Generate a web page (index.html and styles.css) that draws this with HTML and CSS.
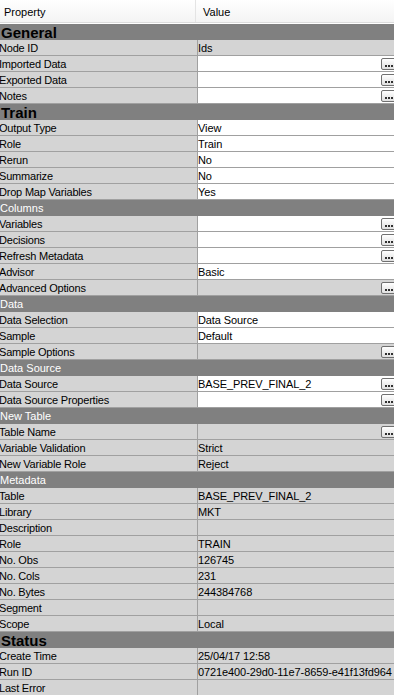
FILE: index.html
```html
<!DOCTYPE html>
<html>
<head>
<meta charset="utf-8">
<link rel="stylesheet" href="styles.css">
</head>
<body>
<div class="grid">
  <div class="head">
    <div class="hcell name">Property</div>
    <div class="hcell val">Value</div>
  </div>

  <div class="sec big">General</div>
  <div class="row"><div class="k">Node ID</div><div class="v ro">Ids</div></div>
  <div class="row"><div class="k">Imported Data</div><div class="v"><span></span><b class="btn"><i></i><i></i><i></i></b></div></div>
  <div class="row"><div class="k">Exported Data</div><div class="v"><span></span><b class="btn"><i></i><i></i><i></i></b></div></div>
  <div class="row"><div class="k">Notes</div><div class="v"><span></span><b class="btn"><i></i><i></i><i></i></b></div></div>

  <div class="sec big">Train</div>
  <div class="row"><div class="k">Output Type</div><div class="v">View</div></div>
  <div class="row"><div class="k">Role</div><div class="v">Train</div></div>
  <div class="row"><div class="k">Rerun</div><div class="v">No</div></div>
  <div class="row"><div class="k">Summarize</div><div class="v">No</div></div>
  <div class="row"><div class="k">Drop Map Variables</div><div class="v">Yes</div></div>

  <div class="sec">Columns</div>
  <div class="row"><div class="k">Variables</div><div class="v"><span></span><b class="btn"><i></i><i></i><i></i></b></div></div>
  <div class="row"><div class="k">Decisions</div><div class="v"><span></span><b class="btn"><i></i><i></i><i></i></b></div></div>
  <div class="row"><div class="k">Refresh Metadata</div><div class="v"><span></span><b class="btn"><i></i><i></i><i></i></b></div></div>
  <div class="row"><div class="k">Advisor</div><div class="v">Basic</div></div>
  <div class="row"><div class="k">Advanced Options</div><div class="v ro"><span></span><b class="btn"><i></i><i></i><i></i></b></div></div>

  <div class="sec">Data</div>
  <div class="row"><div class="k">Data Selection</div><div class="v">Data Source</div></div>
  <div class="row"><div class="k">Sample</div><div class="v">Default</div></div>
  <div class="row"><div class="k">Sample Options</div><div class="v ro"><span></span><b class="btn"><i></i><i></i><i></i></b></div></div>

  <div class="sec">Data Source</div>
  <div class="row"><div class="k">Data Source</div><div class="v"><span>BASE_PREV_FINAL_2</span><b class="btn"><i></i><i></i><i></i></b></div></div>
  <div class="row"><div class="k">Data Source Properties</div><div class="v"><span></span><b class="btn"><i></i><i></i><i></i></b></div></div>

  <div class="sec">New Table</div>
  <div class="row"><div class="k">Table Name</div><div class="v ro"><span></span><b class="btn"><i></i><i></i><i></i></b></div></div>
  <div class="row"><div class="k">Variable Validation</div><div class="v ro">Strict</div></div>
  <div class="row"><div class="k">New Variable Role</div><div class="v ro">Reject</div></div>

  <div class="sec">Metadata</div>
  <div class="row"><div class="k">Table</div><div class="v ro">BASE_PREV_FINAL_2</div></div>
  <div class="row"><div class="k">Library</div><div class="v ro">MKT</div></div>
  <div class="row"><div class="k">Description</div><div class="v ro"></div></div>
  <div class="row"><div class="k">Role</div><div class="v ro">TRAIN</div></div>
  <div class="row"><div class="k">No. Obs</div><div class="v ro">126745</div></div>
  <div class="row"><div class="k">No. Cols</div><div class="v ro">231</div></div>
  <div class="row"><div class="k">No. Bytes</div><div class="v ro">244384768</div></div>
  <div class="row"><div class="k">Segment</div><div class="v ro"></div></div>
  <div class="row"><div class="k">Scope</div><div class="v ro">Local</div></div>

  <div class="sec big">Status</div>
  <div class="row"><div class="k">Create Time</div><div class="v ro">25/04/17 12:58</div></div>
  <div class="row"><div class="k">Run ID</div><div class="v ro">0721e400-29d0-11e7-8659-e41f13fd964</div></div>
  <div class="row"><div class="k">Last Error</div><div class="v ro"></div></div>
</div>
</body>
</html>
```
FILE: styles.css
```css
html, body {
  margin: 0;
  padding: 0;
  background: #ffffff;
}
body {
  font-family: "Liberation Sans", Arial, sans-serif;
  font-size: 11px;
  color: #000;
  overflow: hidden;
}
.grid {
  width: 394px;
  display: flex;
  flex-direction: column;
}
.head {
  height: 22px;
  display: grid;
  grid-template-columns: 196px 1fr;
  background: linear-gradient(#ffffff, #f4f4f4);
  border-bottom: 1px solid #dcdcdc;
  margin-bottom: 1px;
}
.hcell {
  display: flex;
  align-items: center;
  font-size: 11px;
  padding-top: 2px;
}
.hcell.name {
  padding-left: 4px;
  border-right: 1px solid #e4e4e4;
}
.hcell.val {
  padding-left: 7px;
}
.sec {
  height: 16px;
  background: #808080;
  color: #ffffff;
  display: flex;
  align-items: center;
  padding-left: 0;
  font-size: 11px;
  white-space: nowrap;
}
.sec.big {
  color: #000000;
  font-weight: bold;
  font-size: 15px;
  padding-left: 1px;
  padding-top: 1px;
  box-sizing: border-box;
}
.row {
  height: 16px;
  display: grid;
  grid-template-columns: 198px 1fr;
  box-sizing: border-box;
  border-bottom: 1px solid #a0a0a0;
}
.k {
  background: #d4d4d4;
  border-right: 1px solid #a0a0a0;
  margin-left: -1px;
  display: flex;
  align-items: center;
  white-space: nowrap;
  overflow: hidden;
  letter-spacing: -0.2px;
}
.v {
  background: #ffffff;
  padding-left: 0;
  display: flex;
  align-items: center;
  justify-content: space-between;
  white-space: nowrap;
  overflow: hidden;
  letter-spacing: -0.1px;
}
.v.ro {
  background: #d4d4d4;
}
.btn {
  flex: none;
  width: 15px;
  height: 12px;
  box-sizing: border-box;
  margin-right: -2px;
  border: 1px solid #707070;
  border-radius: 2px;
  background: linear-gradient(#ffffff, #e0e0e0);
  display: flex;
  align-items: flex-end;
  justify-content: center;
  gap: 1px;
  padding-bottom: 2px;
}
.btn i {
  display: block;
  width: 2px;
  height: 2px;
  background: #303030;
}
```
